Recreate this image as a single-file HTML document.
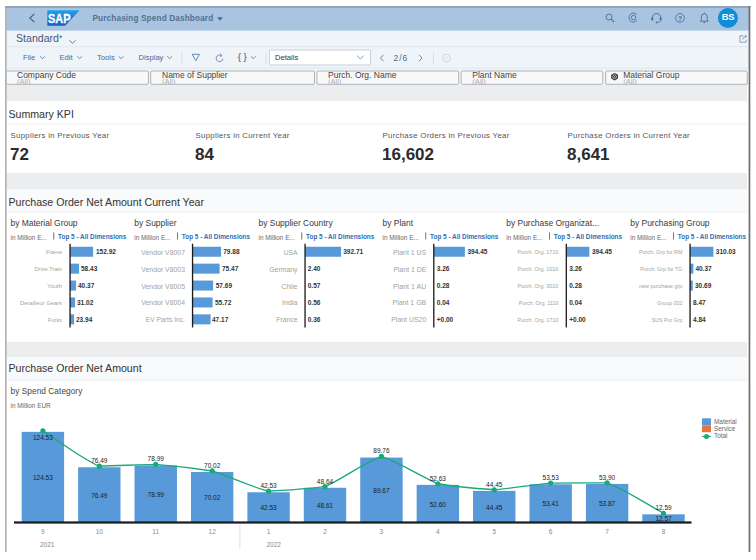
<!DOCTYPE html>
<html lang="en"><head><meta charset="utf-8"><title>Purchasing Spend Dashboard</title>
<style>
html,body{margin:0;padding:0;background:#fff;}
body{width:756px;height:560px;position:relative;overflow:hidden;font-family:"Liberation Sans",sans-serif;color:#333;}
.a{position:absolute;white-space:nowrap;line-height:1;}
.b{position:absolute;}
.t{font-size:10.6px;color:#333;}
.kl{font-size:7.8px;color:#555;letter-spacing:0.3px;}
.kv{font-size:17px;font-weight:bold;color:#2b2b2b;}
.ct{font-size:8.45px;color:#3a3a3a;}
.un{font-size:6.4px;color:#686868;}
.tp{font-size:6.4px;font-weight:bold;color:#2f6db3;}
.lb{color:#a2a2a2;text-align:right;}
.vl{font-size:6.5px;font-weight:bold;color:#333;}
.tb{font-size:7.6px;color:#456a9f;}
.fl{font-size:8.5px;color:#444;}
.fa{font-size:7.6px;color:#adadad;}
.cl{font-size:6.5px;color:#1c1c1c;}
.xl{font-size:6.5px;color:#8a8a8a;}
</style></head><body>
<svg class="b" style="left:0;top:0" width="756" height="560" viewBox="0 0 756 560" font-family="Liberation Sans, sans-serif">
<rect x="5.00" y="6.00" width="744.50" height="546.00" fill="#fff" />
<rect x="5.00" y="6.00" width="744.50" height="24.80" fill="#a9c4e0" />
<rect x="5.00" y="30.80" width="744.50" height="37.70" fill="#eff4f9" />
<rect x="5.00" y="46.30" width="744.50" height="0.90" fill="#dbe5ef" />
<rect x="5.00" y="67.80" width="744.50" height="0.90" fill="#d5e0ec" />
<rect x="5.00" y="68.70" width="742.20" height="16.50" fill="#f3f5f7" />
<rect x="5.00" y="85.00" width="742.20" height="16.00" fill="#ecedef" />
<g transform="translate(28,13)"><path d="M6.3 1 L1.8 5 L6.3 9" fill="none" stroke="#445f82" stroke-width="1.05"/></g>
<defs><linearGradient id="sg" x1="0" y1="0" x2="0" y2="1"><stop offset="0" stop-color="#22a0ea"/><stop offset="1" stop-color="#155fbd"/></linearGradient></defs>
<g transform="translate(47.3,10.2)"><path d="M0 0 H32.4 L17.8 15.6 H0 Z" fill="url(#sg)"/><text x="0.8" y="12.9" font-family="Liberation Sans, sans-serif" font-weight="bold" font-size="13.6" fill="#fff" stroke="#fff" stroke-width="0.35" textLength="22.4" lengthAdjust="spacingAndGlyphs">SAP</text></g>
<g transform="translate(217,17)"><path d="M0.3 0.3 H5.7 L3 3.7 Z" fill="#4c6785"/></g>
<g transform="translate(604,12)"><circle cx="5" cy="5" r="3" fill="none" stroke="#4f6b8c" stroke-width="0.9"/><path d="M7.2 7.2 L10.2 10.2" stroke="#4f6b8c" stroke-width="1.1"/></g>
<g transform="translate(627.4,11.6)"><path d="M9.6 3.2 A4.5 4.5 0 1 0 9.6 8.8" fill="none" stroke="#4f6b8c" stroke-width="0.85"/><circle cx="6.2" cy="6" r="2.3" fill="none" stroke="#4f6b8c" stroke-width="0.85"/></g>
<g transform="translate(650,12)"><path d="M2.2 7 V5.8 A4.3 4.3 0 0 1 10.8 5.8 V7" fill="none" stroke="#4f6b8c" stroke-width="0.9"/><rect x="1.4" y="5.6" width="1.8" height="3" rx="0.6" fill="#4f6b8c"/><rect x="9.8" y="5.6" width="1.8" height="3" rx="0.6" fill="#4f6b8c"/><path d="M10.6 8.4 Q10.4 10.4 7 10.4" fill="none" stroke="#4f6b8c" stroke-width="0.7"/><circle cx="6.6" cy="10.4" r="0.9" fill="#4f6b8c"/></g>
<g transform="translate(674,12)"><circle cx="6" cy="6" r="4.4" fill="none" stroke="#4f6b8c" stroke-width="0.8"/><text x="6" y="8.5" font-size="6.8" font-weight="bold" text-anchor="middle" fill="#4f6b8c" font-family="Liberation Sans, sans-serif">?</text></g>
<g transform="translate(697.6,10.9)"><g transform="scale(1.12)"><path d="M3.4 8.2 V5.2 A2.6 2.6 0 0 1 8.6 5.2 V8.2 L9.6 9.2 H2.4 Z" fill="none" stroke="#4f6b8c" stroke-width="0.8" stroke-linejoin="round"/><path d="M5.2 10.4 H6.8" stroke="#4f6b8c" stroke-width="0.8"/><path d="M6 1.6 V2.6" stroke="#4f6b8c" stroke-width="0.8"/></g></g>
<circle cx="727.9" cy="18" r="10" fill="#108dd8"/>
<g transform="translate(68.5,39.5)"><path d="M0.8 0.8 L4 3.8 L7.2 0.8" fill="none" stroke="#56739a" stroke-width="0.9"/></g>
<g transform="translate(738.3,33.6)"><path d="M5 2.2 H1.6 V8.6 H7.8 V6" fill="none" stroke="#6d8fb8" stroke-width="0.8"/><path d="M4.4 6 Q4.6 3 8 2.6 M6.6 1 L8.4 2.6 L6.8 4.4" fill="none" stroke="#6d8fb8" stroke-width="0.8"/></g>
<g transform="translate(39.5,55.7)"><path d="M0.6 0.6 L3 3 L5.4 0.6" fill="none" stroke="#6484ae" stroke-width="0.95"/></g>
<g transform="translate(76.5,55.7)"><path d="M0.6 0.6 L3 3 L5.4 0.6" fill="none" stroke="#6484ae" stroke-width="0.95"/></g>
<g transform="translate(118,55.7)"><path d="M0.6 0.6 L3 3 L5.4 0.6" fill="none" stroke="#6484ae" stroke-width="0.95"/></g>
<g transform="translate(166.7,55.7)"><path d="M0.6 0.6 L3 3 L5.4 0.6" fill="none" stroke="#6484ae" stroke-width="0.95"/></g>
<rect x="181.40" y="52.00" width="0.90" height="12.00" fill="#d3dce8" />
<g transform="translate(191,53)"><path d="M1.2 1.3 H8.4 L4.8 7.6 Z" fill="none" stroke="#5c7ea8" stroke-width="0.9" stroke-linejoin="round"/></g>
<g transform="translate(214.5,53)"><g transform="scale(1.05)"><path d="M8 5.4 A3.2 3.2 0 1 1 6.2 2.2" fill="none" stroke="#5c7ea8" stroke-width="0.8"/><path d="M5.4 0.8 L7.2 2.4 L5.2 3.4" fill="none" stroke="#5c7ea8" stroke-width="0.8"/></g></g>
<g transform="translate(250.3,55.7)"><path d="M0.6 0.6 L3 3 L5.4 0.6" fill="none" stroke="#6484ae" stroke-width="0.95"/></g>
<rect x="265.50" y="52.00" width="0.90" height="12.00" fill="#d3dce8" />
<rect x="269.50" y="50.00" width="101.00" height="15.00" fill="#fff" stroke="#c3ccd8" stroke-width="0.9" rx="1"/>
<g transform="translate(356.4,55)"><path d="M0.6 0.6 L4 3.9 L7.4 0.6" fill="none" stroke="#7a8ea8" stroke-width="0.9"/></g>
<g transform="translate(379.5,54)"><path d="M4 0.8 L1 4 L4 7.2" fill="none" stroke="#5c7ea8" stroke-width="0.9"/></g>
<g transform="translate(418,54)"><path d="M1 0.8 L4 4 L1 7.2" fill="none" stroke="#5c7ea8" stroke-width="0.9"/></g>
<rect x="433.00" y="52.00" width="0.90" height="12.00" fill="#d3dce8" />
<g transform="translate(441.5,53)"><circle cx="5" cy="5" r="3.8" fill="none" stroke="#c3cfde" stroke-width="0.8"/><path d="M3.4 6.6 L6.6 3.4" stroke="#c3cfde" stroke-width="0.8"/></g>
<rect x="6.00" y="71.00" width="142.40" height="13.30" fill="#f8f8f8" stroke="#adb1b7" stroke-width="1" rx="1.2"/>
<rect x="150.70" y="71.00" width="163.80" height="13.30" fill="#f8f8f8" stroke="#adb1b7" stroke-width="1" rx="1.2"/>
<rect x="316.90" y="71.00" width="141.80" height="13.30" fill="#f8f8f8" stroke="#adb1b7" stroke-width="1" rx="1.2"/>
<rect x="461.10" y="71.00" width="141.70" height="13.30" fill="#f8f8f8" stroke="#adb1b7" stroke-width="1" rx="1.2"/>
<rect x="605.70" y="71.00" width="141.60" height="13.30" fill="#f8f8f8" stroke="#adb1b7" stroke-width="1" rx="1.2"/>
<g transform="translate(610.6,72.7)"><path d="M4 0.2 L7.4 2.1 V5.9 L4 7.8 L0.6 5.9 V2.1 Z" fill="#2e3440"/><circle cx="4" cy="4" r="1.9" fill="none" stroke="#d8dde6" stroke-width="0.7"/><circle cx="4" cy="4" r="0.7" fill="#e9a56a"/><path d="M4 0.2 V2.1 M0.6 5.9 L2.3 4.9 M7.4 5.9 L5.7 4.9" stroke="#6f9bd0" stroke-width="0.5"/></g>
<rect x="5.00" y="101.00" width="742.20" height="23.00" fill="#fefefe" />
<rect x="5.00" y="123.80" width="742.20" height="0.90" fill="#f1f1f1" />
<rect x="5.00" y="173.00" width="742.20" height="16.50" fill="#ecedef" />
<rect x="5.00" y="189.50" width="742.20" height="22.30" fill="#f9fafb" />
<rect x="5.00" y="211.80" width="742.20" height="0.90" fill="#eceef0" />
<rect x="5.00" y="342.00" width="742.20" height="15.00" fill="#ecedef" />
<rect x="53.40" y="232.40" width="0.80" height="7.20" fill="#555" />
<rect x="70.00" y="246.75" width="23.10" height="10.00" fill="#5899da" />
<text x="46.00" y="254" font-size="6.2" fill="#a2a2a2" textLength="16.00" lengthAdjust="spacingAndGlyphs">Frame</text>
<rect x="70.00" y="263.65" width="9.10" height="10.00" fill="#5899da" />
<text x="34.50" y="271" font-size="6.2" fill="#a2a2a2" textLength="27.50" lengthAdjust="spacingAndGlyphs">Drive Train</text>
<rect x="70.00" y="280.55" width="6.10" height="10.00" fill="#5899da" />
<text x="47.00" y="288" font-size="6.2" fill="#a2a2a2" textLength="15.00" lengthAdjust="spacingAndGlyphs">Youth</text>
<rect x="70.00" y="297.45" width="5.10" height="10.00" fill="#5899da" />
<text x="20.00" y="305" font-size="6.2" fill="#a2a2a2" textLength="42.00" lengthAdjust="spacingAndGlyphs">Derailleur Gears</text>
<rect x="70.00" y="314.35" width="4.10" height="10.00" fill="#5899da" />
<text x="48.00" y="322" font-size="6.2" fill="#a2a2a2" textLength="14.00" lengthAdjust="spacingAndGlyphs">Forks</text>
<rect x="69.40" y="243.75" width="1.30" height="83.75" fill="#1a1a1a" />
<rect x="177.15" y="232.40" width="0.80" height="7.20" fill="#555" />
<rect x="192.50" y="246.75" width="28.60" height="10.00" fill="#5899da" />
<text x="141.25" y="255" font-size="7.2" fill="#a2a2a2" textLength="43.75" lengthAdjust="spacingAndGlyphs">Vendor V8007</text>
<rect x="192.50" y="263.65" width="27.10" height="10.00" fill="#5899da" />
<text x="141.25" y="272" font-size="7.2" fill="#a2a2a2" textLength="43.75" lengthAdjust="spacingAndGlyphs">Vendor V8003</text>
<rect x="192.50" y="280.55" width="20.60" height="10.00" fill="#5899da" />
<text x="141.25" y="289" font-size="7.2" fill="#a2a2a2" textLength="43.75" lengthAdjust="spacingAndGlyphs">Vendor V8005</text>
<rect x="192.50" y="297.45" width="20.10" height="10.00" fill="#5899da" />
<text x="141.25" y="305" font-size="7.2" fill="#a2a2a2" textLength="43.75" lengthAdjust="spacingAndGlyphs">Vendor V8004</text>
<rect x="192.50" y="314.35" width="18.10" height="10.00" fill="#5899da" />
<text x="145.75" y="322" font-size="7.2" fill="#a2a2a2" textLength="39.25" lengthAdjust="spacingAndGlyphs">EV Parts Inc.</text>
<rect x="191.90" y="243.75" width="1.30" height="83.75" fill="#1a1a1a" />
<rect x="301.40" y="232.40" width="0.80" height="7.20" fill="#555" />
<rect x="305.00" y="246.75" width="36.10" height="10.00" fill="#5899da" />
<text x="283.75" y="255" font-size="7.3" fill="#a2a2a2" textLength="13.75" lengthAdjust="spacingAndGlyphs">USA</text>
<text x="269.25" y="272" font-size="7.3" fill="#a2a2a2" textLength="28.25" lengthAdjust="spacingAndGlyphs">Germany</text>
<text x="281.25" y="289" font-size="7.3" fill="#a2a2a2" textLength="16.25" lengthAdjust="spacingAndGlyphs">Chile</text>
<text x="282.00" y="305" font-size="7.3" fill="#a2a2a2" textLength="15.50" lengthAdjust="spacingAndGlyphs">India</text>
<text x="276.25" y="322" font-size="7.3" fill="#a2a2a2" textLength="21.25" lengthAdjust="spacingAndGlyphs">France</text>
<rect x="304.40" y="243.75" width="1.30" height="83.75" fill="#1a1a1a" />
<rect x="425.40" y="232.40" width="0.80" height="7.20" fill="#555" />
<rect x="433.75" y="246.75" width="31.10" height="10.00" fill="#5899da" />
<text x="393.00" y="255" font-size="7.2" fill="#a2a2a2" textLength="33.25" lengthAdjust="spacingAndGlyphs">Plant 1 US</text>
<text x="393.50" y="272" font-size="7.2" fill="#a2a2a2" textLength="32.75" lengthAdjust="spacingAndGlyphs">Plant 1 DE</text>
<text x="393.00" y="289" font-size="7.2" fill="#a2a2a2" textLength="33.25" lengthAdjust="spacingAndGlyphs">Plant 1 AU</text>
<text x="392.50" y="305" font-size="7.2" fill="#a2a2a2" textLength="33.75" lengthAdjust="spacingAndGlyphs">Plant 1 GB</text>
<text x="391.25" y="322" font-size="7.2" fill="#a2a2a2" textLength="35.00" lengthAdjust="spacingAndGlyphs">Plant US20</text>
<rect x="433.15" y="243.75" width="1.30" height="83.75" fill="#1a1a1a" />
<rect x="549.15" y="232.40" width="0.80" height="7.20" fill="#555" />
<rect x="566.25" y="246.75" width="23.10" height="10.00" fill="#5899da" />
<text x="517.50" y="254" font-size="6.1" fill="#a2a2a2" textLength="40.75" lengthAdjust="spacingAndGlyphs">Purch. Org. 1710</text>
<text x="517.50" y="271" font-size="6.1" fill="#a2a2a2" textLength="40.75" lengthAdjust="spacingAndGlyphs">Purch. Org. 1010</text>
<text x="517.50" y="288" font-size="6.1" fill="#a2a2a2" textLength="40.75" lengthAdjust="spacingAndGlyphs">Purch. Org. 3010</text>
<text x="518.75" y="305" font-size="6.1" fill="#a2a2a2" textLength="39.50" lengthAdjust="spacingAndGlyphs">Purch. Org. 1110</text>
<text x="517.50" y="322" font-size="6.1" fill="#a2a2a2" textLength="40.75" lengthAdjust="spacingAndGlyphs">Purch. Org. 1710</text>
<rect x="565.65" y="243.75" width="1.30" height="83.75" fill="#1a1a1a" />
<rect x="673.15" y="232.40" width="0.80" height="7.20" fill="#555" />
<rect x="690.00" y="246.75" width="23.40" height="10.00" fill="#5899da" />
<text x="639.00" y="254" font-size="6.0" fill="#a2a2a2" textLength="43.40" lengthAdjust="spacingAndGlyphs">Purch. Grp for RM</text>
<rect x="690.00" y="263.65" width="3.40" height="10.00" fill="#5899da" />
<text x="640.20" y="271" font-size="6.0" fill="#a2a2a2" textLength="42.20" lengthAdjust="spacingAndGlyphs">Purch. Grp for TG</text>
<rect x="690.00" y="280.55" width="2.80" height="10.00" fill="#5899da" />
<text x="639.00" y="288" font-size="6.0" fill="#a2a2a2" textLength="43.40" lengthAdjust="spacingAndGlyphs">new purchase grp</text>
<text x="657.10" y="305" font-size="6.0" fill="#a2a2a2" textLength="25.30" lengthAdjust="spacingAndGlyphs">Group 002</text>
<text x="651.80" y="322" font-size="6.0" fill="#a2a2a2" textLength="30.60" lengthAdjust="spacingAndGlyphs">SUS Pur Grp</text>
<rect x="689.40" y="243.75" width="1.30" height="83.75" fill="#1a1a1a" />
<rect x="5.00" y="357.00" width="742.20" height="22.50" fill="#f9fafb" />
<rect x="5.00" y="379.50" width="742.20" height="1.20" fill="#eceef0" />
<rect x="21.70" y="431.87" width="42.40" height="90.73" fill="#5899da" />
<rect x="78.12" y="467.26" width="42.40" height="55.34" fill="#5899da" />
<rect x="134.54" y="465.42" width="42.40" height="57.18" fill="#5899da" />
<rect x="190.96" y="472.02" width="42.40" height="50.58" fill="#5899da" />
<rect x="247.38" y="492.27" width="42.40" height="30.33" fill="#5899da" />
<rect x="303.80" y="487.79" width="42.40" height="34.81" fill="#5899da" />
<rect x="360.22" y="457.55" width="42.40" height="65.05" fill="#5899da" />
<rect x="416.64" y="484.85" width="42.40" height="37.75" fill="#5899da" />
<rect x="473.06" y="490.86" width="42.40" height="31.74" fill="#5899da" />
<rect x="529.48" y="484.26" width="42.40" height="38.34" fill="#5899da" />
<rect x="585.90" y="483.92" width="42.40" height="38.68" fill="#5899da" />
<rect x="642.32" y="514.34" width="42.40" height="8.26" fill="#5899da" />
<rect x="14.00" y="521.40" width="677.50" height="2.20" fill="#1a1a1a" />
<path d="M42.90 430.85 C61.71 442.63 80.51 457.95 99.32 466.20 C118.13 465.77 136.93 464.79 155.74 464.36 C174.55 465.90 193.35 468.08 212.16 470.97 C230.97 477.03 249.77 486.48 268.58 491.20 C287.39 490.15 306.19 489.10 325.00 486.70 C343.81 478.29 362.61 463.50 381.42 456.44 C400.23 462.81 419.03 475.72 437.84 483.76 C456.65 486.84 475.45 488.38 494.26 489.78 C513.07 488.23 531.87 484.74 550.68 483.10 C569.49 482.96 588.29 482.89 607.10 482.83 C625.91 489.92 644.71 503.10 663.52 513.23" fill="none" stroke="#19a979" stroke-width="1.35" stroke-linejoin="round"/>
<circle cx="42.90" cy="430.85" r="2.6" fill="#19a979"/>
<circle cx="99.32" cy="466.20" r="2.6" fill="#19a979"/>
<circle cx="155.74" cy="464.36" r="2.6" fill="#19a979"/>
<circle cx="212.16" cy="470.97" r="2.6" fill="#19a979"/>
<circle cx="268.58" cy="491.20" r="2.6" fill="#19a979"/>
<circle cx="325.00" cy="486.70" r="2.6" fill="#19a979"/>
<circle cx="381.42" cy="456.44" r="2.6" fill="#19a979"/>
<circle cx="437.84" cy="483.76" r="2.6" fill="#19a979"/>
<circle cx="494.26" cy="489.78" r="2.6" fill="#19a979"/>
<circle cx="550.68" cy="483.10" r="2.6" fill="#19a979"/>
<circle cx="607.10" cy="482.83" r="2.6" fill="#19a979"/>
<circle cx="663.52" cy="513.23" r="2.6" fill="#19a979"/>
<rect x="239.50" y="524.50" width="0.80" height="24.00" fill="#dcdcdc" />
<rect x="702.00" y="418.30" width="9.00" height="7.20" fill="#5899da" />
<rect x="702.00" y="425.50" width="9.00" height="6.70" fill="#e8743b" />
<rect x="702.00" y="435.80" width="9.00" height="1.20" fill="#19a979" />
<circle cx="706.5" cy="436.4" r="2.5" fill="#19a979"/>
<rect x="5.00" y="6.00" width="1.70" height="546.00" fill="#b4b4b4" />
<rect x="5.00" y="6.20" width="745.30" height="1.60" fill="#8d9db0" />
<rect x="748.60" y="6.00" width="1.70" height="546.00" fill="#6e6e6e" />
</svg>
<div class="a " style="left:92.5px;top:15px;font-size:8.2px;font-weight:bold;color:#56708f;letter-spacing:0.15px;">Purchasing Spend Dashboard</div>
<div class="a " style="left:678px;width:100px;text-align:center;top:13.4px;font-size:9.3px;font-weight:bold;color:#fff;letter-spacing:-0.3px;">BS</div>
<div class="a " style="left:16px;top:33px;font-size:10.6px;color:#3f5b80;">Standard<span style="font-size:8.4px;vertical-align:0.6px;">*</span></div>
<div class="a tb" style="left:23px;top:53.6px;">File</div>
<div class="a tb" style="left:59.5px;top:53.6px;">Edit</div>
<div class="a tb" style="left:97px;top:53.6px;">Tools</div>
<div class="a tb" style="left:138.5px;top:53.6px;">Display</div>
<div class="a " style="left:237.8px;top:54px;font-size:8.2px;font-weight:bold;color:#5c7ea8;letter-spacing:2.4px;">{}</div>
<div class="a " style="left:275px;top:53.6px;font-size:7.6px;color:#333;">Details</div>
<div class="a " style="left:393.4px;top:53.6px;font-size:8.4px;color:#4f6b8c;letter-spacing:1.1px;">2/6</div>
<div class="a fl" style="left:17px;top:71.2px;">Company Code</div>
<div class="a fa" style="left:17px;top:77.7px;height:6.2px;overflow:hidden;">(All)</div>
<div class="a fl" style="left:162px;top:71.2px;">Name of Supplier</div>
<div class="a fa" style="left:162px;top:77.7px;height:6.2px;overflow:hidden;">(All)</div>
<div class="a fl" style="left:328px;top:71.2px;">Purch. Org. Name</div>
<div class="a fa" style="left:328px;top:77.7px;height:6.2px;overflow:hidden;">(All)</div>
<div class="a fl" style="left:472.3px;top:71.2px;">Plant Name</div>
<div class="a fa" style="left:472.3px;top:77.7px;height:6.2px;overflow:hidden;">(All)</div>
<div class="a fl" style="left:623.2px;top:71.2px;">Material Group</div>
<div class="a fa" style="left:623.2px;top:77.7px;height:6.2px;overflow:hidden;">(All)</div>
<div class="a t" style="left:8.5px;top:109.4px;">Summary KPI</div>
<div class="a kl" style="left:10.5px;top:131.5px;">Suppliers in Previous Year</div>
<div class="a kv" style="left:10.0px;top:146.2px;">72</div>
<div class="a kl" style="left:195.5px;top:131.5px;">Suppliers in Current Year</div>
<div class="a kv" style="left:195.0px;top:146.2px;">84</div>
<div class="a kl" style="left:382.5px;top:131.5px;">Purchase Orders in Previous Year</div>
<div class="a kv" style="left:382.0px;top:146.2px;">16,602</div>
<div class="a kl" style="left:567.5px;top:131.5px;">Purchase Orders in Current Year</div>
<div class="a kv" style="left:567.0px;top:146.2px;">8,641</div>
<div class="a t" style="left:8.5px;top:197px;">Purchase Order Net Amount Current Year</div>
<div class="a ct" style="left:10.5px;top:218.8px;">by Material Group</div>
<div class="a un" style="left:10.5px;top:235px;">in Million E...</div>
<div class="a tp" style="left:58.1px;top:234px;">Top 5 - All Dimensions</div>
<div class="a vl" style="left:96px;top:249.15px;">152.92</div>
<div class="a vl" style="left:81px;top:266.04999999999995px;">58.43</div>
<div class="a vl" style="left:78px;top:282.95px;">40.37</div>
<div class="a vl" style="left:77px;top:299.84999999999997px;">31.02</div>
<div class="a vl" style="left:76px;top:316.75px;">23.94</div>
<div class="a ct" style="left:134.25px;top:218.8px;">by Supplier</div>
<div class="a un" style="left:134.25px;top:235px;">in Million E...</div>
<div class="a tp" style="left:181.85px;top:234px;">Top 5 - All Dimensions</div>
<div class="a vl" style="left:223.25px;top:249.15px;">79.88</div>
<div class="a vl" style="left:222px;top:266.04999999999995px;">75.47</div>
<div class="a vl" style="left:215.75px;top:282.95px;">57.69</div>
<div class="a vl" style="left:215px;top:299.84999999999997px;">55.72</div>
<div class="a vl" style="left:212px;top:316.75px;">47.17</div>
<div class="a ct" style="left:258.5px;top:218.8px;">by Supplier Country</div>
<div class="a un" style="left:258.5px;top:235px;">in Million E...</div>
<div class="a tp" style="left:306.1px;top:234px;">Top 5 - All Dimensions</div>
<div class="a vl" style="left:343.25px;top:249.15px;">392.71</div>
<div class="a vl" style="left:307.75px;top:266.04999999999995px;">2.40</div>
<div class="a vl" style="left:307.75px;top:282.95px;">0.57</div>
<div class="a vl" style="left:307.75px;top:299.84999999999997px;">0.56</div>
<div class="a vl" style="left:307.75px;top:316.75px;">0.36</div>
<div class="a ct" style="left:382.5px;top:218.8px;">by Plant</div>
<div class="a un" style="left:382.5px;top:235px;">in Million E...</div>
<div class="a tp" style="left:430.1px;top:234px;">Top 5 - All Dimensions</div>
<div class="a vl" style="left:467.5px;top:249.15px;">394.45</div>
<div class="a vl" style="left:436.75px;top:266.04999999999995px;">3.26</div>
<div class="a vl" style="left:436.75px;top:282.95px;">0.28</div>
<div class="a vl" style="left:436.75px;top:299.84999999999997px;">0.04</div>
<div class="a vl" style="left:436.75px;top:316.75px;">+0.00</div>
<div class="a ct" style="left:506.25px;top:218.8px;">by Purchase Organizat...</div>
<div class="a un" style="left:506.25px;top:235px;">in Million E...</div>
<div class="a tp" style="left:553.85px;top:234px;">Top 5 - All Dimensions</div>
<div class="a vl" style="left:592px;top:249.15px;">394.45</div>
<div class="a vl" style="left:569.25px;top:266.04999999999995px;">3.26</div>
<div class="a vl" style="left:569.25px;top:282.95px;">0.28</div>
<div class="a vl" style="left:569.25px;top:299.84999999999997px;">0.04</div>
<div class="a vl" style="left:569.25px;top:316.75px;">+0.00</div>
<div class="a ct" style="left:630.25px;top:218.8px;">by Purchasing Group</div>
<div class="a un" style="left:630.25px;top:235px;">in Million E...</div>
<div class="a tp" style="left:677.85px;top:234px;">Top 5 - All Dimensions</div>
<div class="a vl" style="left:715.8px;top:249.15px;">310.03</div>
<div class="a vl" style="left:695.4px;top:266.04999999999995px;">40.37</div>
<div class="a vl" style="left:695px;top:282.95px;">30.69</div>
<div class="a vl" style="left:693px;top:299.84999999999997px;">8.47</div>
<div class="a vl" style="left:693px;top:316.75px;">4.84</div>
<div class="a t" style="left:8.5px;top:363px;">Purchase Order Net Amount</div>
<div class="a " style="left:10.5px;top:387px;font-size:8.3px;color:#444;letter-spacing:0.05px;">by Spend Category</div>
<div class="a un" style="left:10.5px;top:402.5px;">in Million EUR</div>
<div class="a cl" style="left:-7.100000000000001px;width:100px;text-align:center;top:475.23560100000003px;">124.53</div>
<div class="a cl" style="left:-7.100000000000001px;width:100px;text-align:center;top:435.34592px;">124.53</div>
<div class="a xl" style="left:-7.100000000000001px;width:100px;text-align:center;top:528.7px;">9</div>
<div class="a cl" style="left:49.31999999999999px;width:100px;text-align:center;top:492.928733px;">76.49</div>
<div class="a cl" style="left:49.31999999999999px;width:100px;text-align:center;top:458.00336px;">76.49</div>
<div class="a xl" style="left:49.31999999999999px;width:100px;text-align:center;top:528.7px;">10</div>
<div class="a cl" style="left:105.74000000000001px;width:100px;text-align:center;top:492.007983px;">78.99</div>
<div class="a cl" style="left:105.74000000000001px;width:100px;text-align:center;top:456.16336px;">78.99</div>
<div class="a xl" style="left:105.74000000000001px;width:100px;text-align:center;top:528.7px;">11</div>
<div class="a cl" style="left:162.16px;width:100px;text-align:center;top:495.311634px;">70.02</div>
<div class="a cl" style="left:162.16px;width:100px;text-align:center;top:462.76528px;">70.02</div>
<div class="a xl" style="left:162.16px;width:100px;text-align:center;top:528.7px;">12</div>
<div class="a cl" style="left:218.57999999999998px;width:100px;text-align:center;top:505.43620100000004px;">42.53</div>
<div class="a cl" style="left:218.57999999999998px;width:100px;text-align:center;top:482.99792px;">42.53</div>
<div class="a xl" style="left:218.57999999999998px;width:100px;text-align:center;top:528.7px;">1</div>
<div class="a cl" style="left:275.0px;width:100px;text-align:center;top:503.196937px;">48.61</div>
<div class="a cl" style="left:275.0px;width:100px;text-align:center;top:478.50096px;">48.64</div>
<div class="a xl" style="left:275.0px;width:100px;text-align:center;top:528.7px;">2</div>
<div class="a cl" style="left:331.41999999999996px;width:100px;text-align:center;top:488.074539px;">89.67</div>
<div class="a cl" style="left:331.41999999999996px;width:100px;text-align:center;top:448.23664px;">89.76</div>
<div class="a xl" style="left:331.41999999999996px;width:100px;text-align:center;top:528.7px;">3</div>
<div class="a cl" style="left:387.84px;width:100px;text-align:center;top:501.72742px;">52.60</div>
<div class="a cl" style="left:387.84px;width:100px;text-align:center;top:475.56432px;">52.63</div>
<div class="a xl" style="left:387.84px;width:100px;text-align:center;top:528.7px;">4</div>
<div class="a cl" style="left:444.26px;width:100px;text-align:center;top:504.72906500000005px;">44.45</div>
<div class="a cl" style="left:444.26px;width:100px;text-align:center;top:481.58480000000003px;">44.45</div>
<div class="a xl" style="left:444.26px;width:100px;text-align:center;top:528.7px;">5</div>
<div class="a cl" style="left:500.68000000000006px;width:100px;text-align:center;top:501.429097px;">53.41</div>
<div class="a cl" style="left:500.68000000000006px;width:100px;text-align:center;top:474.90192px;">53.53</div>
<div class="a xl" style="left:500.68000000000006px;width:100px;text-align:center;top:528.7px;">6</div>
<div class="a cl" style="left:557.1px;width:100px;text-align:center;top:501.25967900000006px;">53.87</div>
<div class="a cl" style="left:557.1px;width:100px;text-align:center;top:474.62960000000004px;">53.90</div>
<div class="a xl" style="left:557.1px;width:100px;text-align:center;top:528.7px;">7</div>
<div class="a cl" style="left:613.52px;width:100px;text-align:center;top:516.470469px;">12.57</div>
<div class="a cl" style="left:613.52px;width:100px;text-align:center;top:505.03376px;">12.59</div>
<div class="a xl" style="left:613.52px;width:100px;text-align:center;top:528.7px;">8</div>
<div class="a xl" style="left:40px;top:541.8px;">2021</div>
<div class="a xl" style="left:266.5px;top:541.8px;">2022</div>
<div class="a " style="left:714px;top:418.8px;font-size:6.4px;color:#686868;">Material</div>
<div class="a " style="left:714px;top:426px;font-size:6.4px;color:#686868;">Service</div>
<div class="a " style="left:714px;top:433px;font-size:6.4px;color:#686868;">Total</div>
</body></html>
